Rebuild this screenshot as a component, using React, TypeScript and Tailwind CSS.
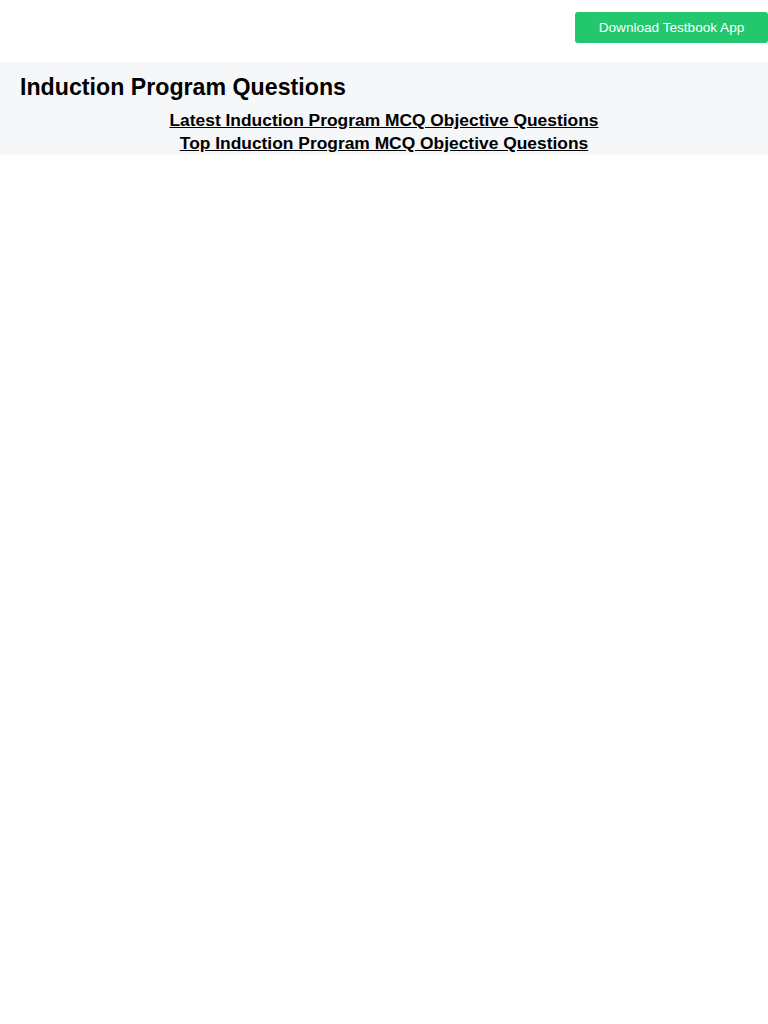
export default function App() {
  return (
    <div className="min-h-screen bg-white font-['Liberation_Sans',Arial,sans-serif] text-black">
      {/* Top bar */}
      <div className="flex justify-end h-[62px] pt-3">
        <a className="flex items-center justify-center w-[193px] h-[31px] pt-px rounded-[3px] bg-[#22c76e] text-white text-[13.6px]">
          Download Testbook App
        </a>
      </div>

      {/* Heading band */}
      <div className="bg-[#f6f7f9] h-[93px] px-5 pt-[10px]">
        <h1 className="text-[23.2px] font-bold leading-[30px]">Induction Program Questions</h1>
        <div className="flex flex-col items-center mt-[7px] text-[17.4px] font-bold leading-[23px]">
          <a className="underline">Latest Induction Program MCQ Objective Questions</a>
          <a className="underline">Top Induction Program MCQ Objective Questions</a>
        </div>
      </div>
    </div>
  );
}
